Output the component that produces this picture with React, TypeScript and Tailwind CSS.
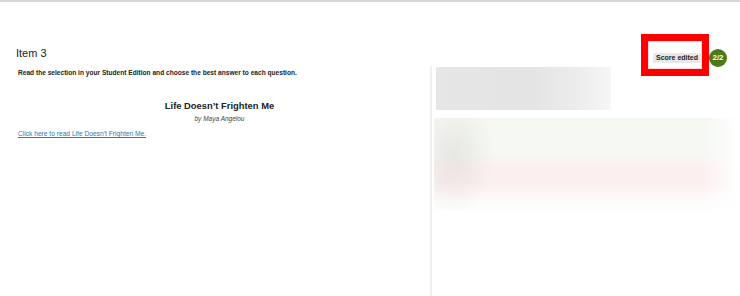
export default function App() {
  return (
    <div className="relative w-[740px] h-[296px] overflow-hidden bg-white font-['Liberation_Sans',Arial,sans-serif] text-[#222]">
      <div className="h-[2px] bg-[#d6d6d6]" />

      {/* header */}
      <div className="flex h-[64px] items-start justify-between pl-4 pr-[13px] pt-[45px]">
        <h1 className="text-[11px] leading-[12px] font-normal">Item 3</h1>
        <div className="mt-[2px] flex items-center gap-2">
          <span className="rounded-[2px] bg-[#e8e8e8] px-[3px] text-[7px] leading-[10px] font-bold text-[#222]">
            Score edited
          </span>
          <span className="flex h-[18px] w-[18px] items-center justify-center rounded-full bg-[#4b7a16] text-[8px] font-bold text-white">
            2/2
          </span>
        </div>
      </div>

      {/* body */}
      <div className="flex h-[230px]">
        <div className="w-[430px] pl-[18px] pr-[9px] pt-[2px]">
          <p className="text-[6.6px] leading-[9px] font-bold">
            Read the selection in your Student Edition and choose the best answer to each question.
          </p>
          <h2 className="mt-[23px] text-center text-[9.4px] leading-[12px] font-bold">
            Life Doesn’t Frighten Me
          </h2>
          <p className="mt-[3px] text-center text-[6.5px] leading-[8px] italic text-[#444]">
            by Maya Angelou
          </p>
          <a href="#" className="mt-[7px] block text-[6.65px] leading-[8px] text-[#2a78b9] underline">
            Click here to read Life Doesn’t Frighten Me.
          </a>
        </div>

        <div className="flex-1 border-l-2 border-[#eeeeee] pl-[2px]">
          <div className="ml-[2px] mt-[1px] h-[43px] w-[175px] bg-[linear-gradient(90deg,#e6e6e6_0%,#e4e4e4_55%,#ececec_80%,#f6f6f6_100%)]" />
          <div className="mt-[8px] h-[93px] bg-[radial-gradient(ellipse_40px_60px_at_20px_40%,rgba(200,200,195,0.35),transparent),linear-gradient(180deg,#f6f8f4_0%,#f6f8f3_38%,#fbf0ef_55%,#fcefef_70%,#fdf9f9_85%,#fefefe_100%)] [mask-image:linear-gradient(90deg,black_88%,transparent_100%)]" />
        </div>
      </div>

      {/* annotation overlay */}
      <div className="absolute left-[641px] top-[34px] h-[42px] w-[68px] border-[7px] border-[#ff0000]">
        <div className="h-full w-full border border-[#f6d8d8]" />
      </div>
    </div>
  );
}
